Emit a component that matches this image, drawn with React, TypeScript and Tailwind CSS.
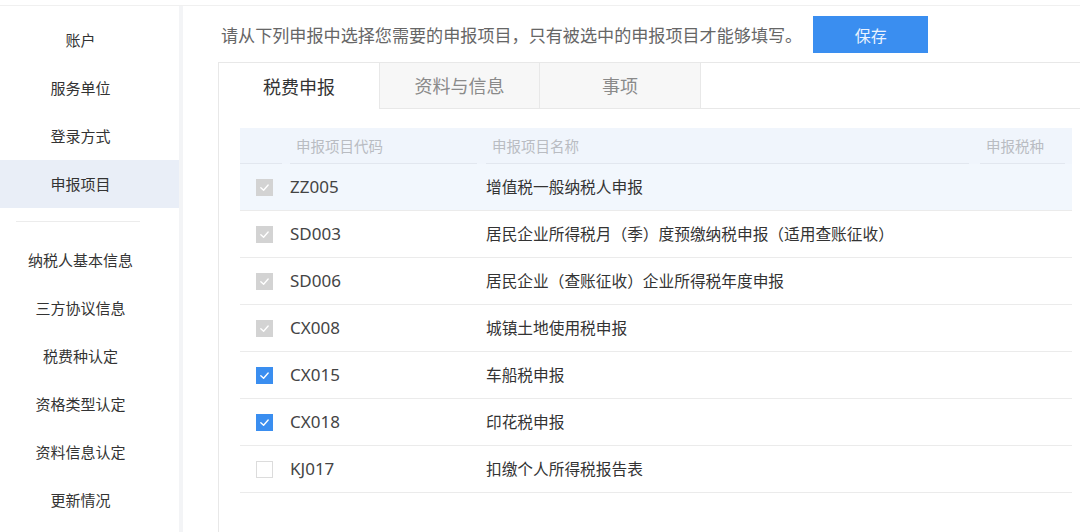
import React from "react";

type Item = { code: string; name: string; state: "locked" | "checked" | "empty" };

const menuTop = ["账户", "服务单位", "登录方式", "申报项目"];
const menuBottom = ["纳税人基本信息", "三方协议信息", "税费种认定", "资格类型认定", "资料信息认定", "更新情况"];

const items: Item[] = [
    { code: "ZZ005", name: "增值税一般纳税人申报", state: "locked" },
    { code: "SD003", name: "居民企业所得税月（季）度预缴纳税申报（适用查账征收）", state: "locked" },
    { code: "SD006", name: "居民企业（查账征收）企业所得税年度申报", state: "locked" },
    { code: "CX008", name: "城镇土地使用税申报", state: "locked" },
    { code: "CX015", name: "车船税申报", state: "checked" },
    { code: "CX018", name: "印花税申报", state: "checked" },
    { code: "KJ017", name: "扣缴个人所得税报告表", state: "empty" },
];

function CheckBox({ state }: { state: Item["state"] }) {
    if (state === "empty") {
        return <span className="block h-[17px] w-[17px] border border-[#dcdcdc] bg-white" />;
    }
    const bg = state === "locked" ? "bg-[#d3d3d3]" : "bg-[#3a8ef0]";
    return (
        <span className={`flex h-[17px] w-[17px] items-center justify-center ${bg}`}>
            <svg viewBox="0 0 12 12" className="h-[11px] w-[11px]" fill="none">
                <polyline points="2,6.3 5,9 10,3.2" stroke="white" strokeWidth="1.5" strokeLinecap="round" strokeLinejoin="round" />
            </svg>
        </span>
    );
}

export default function App() {
    return (
        <div className="h-[532px] w-[1080px] overflow-hidden bg-white font-['Noto_Sans','Noto_Sans_CJK_SC',sans-serif]">
            {/* top hairline */}
            <div className="h-[6px] border-b border-[#f0f0f0]" />

            <div className="flex h-[526px]">
                {/* Sidebar */}
                <aside className="w-[183px] shrink-0 border-r-[4px] border-[#f3f4f6] pt-[10px] font-['Noto_Sans_CJK_SC',sans-serif] text-[15px] text-[#333]">
                    {menuTop.map((m, i) => (
                        <div
                            key={m}
                            className={`flex h-[48px] items-center justify-center pr-[18px] ${i === 3 ? "bg-[#e9eef7]" : ""}`}
                        >
                            {m}
                        </div>
                    ))}
                    <div className="mx-[16px] my-[13px] w-[124px] border-t border-[#ececec]" />
                    <div className="pt-[1px]">
                        {menuBottom.map((m) => (
                            <div key={m} className="flex h-[48px] items-center justify-center pr-[18px]">
                                {m}
                            </div>
                        ))}
                    </div>
                </aside>

                {/* Main */}
                <main className="flex-1 pl-[35px]">
                    <div className="mt-[10px] flex h-[37px] items-center">
                        <p className="pl-[3px] pt-[1px] font-['Noto_Sans_CJK_SC',sans-serif] text-[17.1px] text-[#666]">
                            请从下列申报中选择您需要的申报项目，只有被选中的申报项目才能够填写。
                        </p>
                        <button className="ml-[11px] h-[37px] w-[115px] bg-[#3a8ef0] font-['Noto_Sans_CJK_SC',sans-serif] text-[16px] text-[#eaf3ff]">
                            保存
                        </button>
                    </div>

                    <section className="mt-[9px] h-[500px] border-l border-t border-[#e8e8e8]">
                        {/* Tabs */}
                        <div className="flex h-[46px] font-['Noto_Sans_CJK_SC',sans-serif] text-[18px]">
                            <div className="flex w-[161px] items-center justify-center border-r border-[#e8e8e8] bg-white text-[#333]">
                                税费申报
                            </div>
                            <div className="flex w-[160px] items-center justify-center border-b border-r border-[#e8e8e8] bg-[#f7f7f7] text-[#8a8a8a]">
                                资料与信息
                            </div>
                            <div className="flex w-[161px] items-center justify-center border-b border-r border-[#e8e8e8] bg-[#f7f7f7] text-[#8a8a8a]">
                                事项
                            </div>
                            <div className="flex-1 border-b border-[#e8e8e8]" />
                        </div>

                        {/* Table */}
                        <div className="pl-[21px] pt-[19px]">
                            <div className="w-[832px]">
                                <div className="grid h-[36px] grid-cols-[50px_196px_494px_92px] bg-[#f0f5fc] font-['Noto_Sans_CJK_SC',sans-serif] text-[14.5px] text-[#b9bcc2]">
                                    <div className="mr-[8px] border-b border-[#e2e7ef]" />
                                    <div className="mr-[9px] flex items-center border-b border-[#e2e7ef] pl-[6px]">申报项目代码</div>
                                    <div className="mr-[11px] flex items-center border-b border-[#e2e7ef] pl-[6px]">申报项目名称</div>
                                    <div className="mr-[7px] flex items-center border-b border-[#e2e7ef] pl-[6px]">申报税种</div>
                                </div>
                                {items.map((it, i) => (
                                    <div
                                        key={it.code}
                                        className={`grid h-[47px] grid-cols-[50px_196px_494px_92px] items-center border-b border-[#ebebeb] ${i === 0 ? "bg-[#f2f7fd]" : ""}`}
                                    >
                                        <div className="flex justify-center pr-[2px]">
                                            <CheckBox state={it.state} />
                                        </div>
                                        <div className="text-[17px] text-[#444]">{it.code}</div>
                                        <div className="whitespace-nowrap font-['Noto_Sans_CJK_SC',sans-serif] text-[15.7px] text-[#333]">
                                            {it.name}
                                        </div>
                                        <div />
                                    </div>
                                ))}
                            </div>
                        </div>
                    </section>
                </main>
            </div>
        </div>
    );
}
